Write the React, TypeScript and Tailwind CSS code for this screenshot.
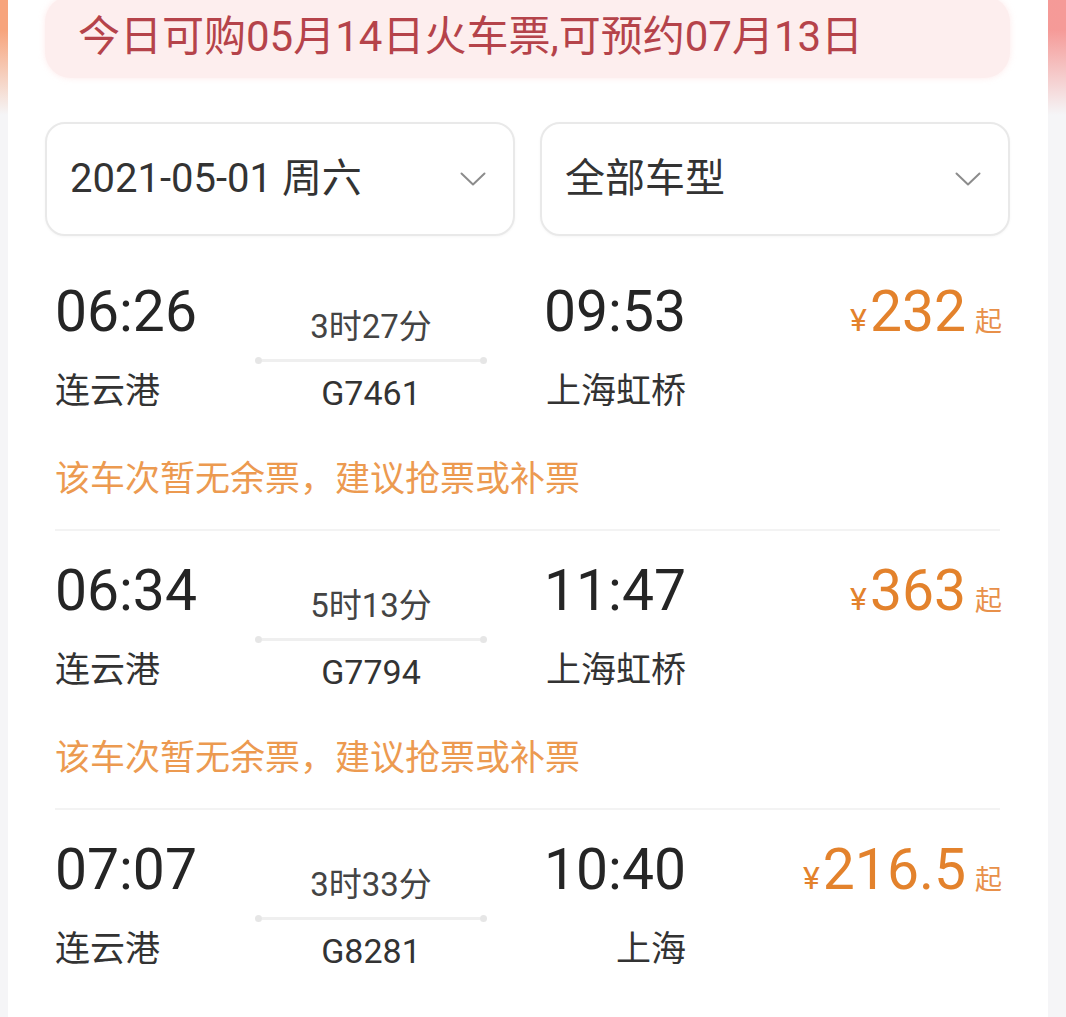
import React from "react";

type Train = {
  dep: string;
  from: string;
  dur: string;
  no: string;
  arr: string;
  to: string;
  price: string;
};

const trains: Train[] = [
  { dep: "06:26", from: "连云港", dur: "3时27分", no: "G7461", arr: "09:53", to: "上海虹桥", price: "232" },
  { dep: "06:34", from: "连云港", dur: "5时13分", no: "G7794", arr: "11:47", to: "上海虹桥", price: "363" },
  { dep: "07:07", from: "连云港", dur: "3时33分", no: "G8281", arr: "10:40", to: "上海", price: "216.5" },
];

function Chevron() {
  return (
    <svg width="26" height="14" viewBox="0 0 26 14" fill="none">
      <path d="M1.5 1.5 L13 12.5 L24.5 1.5" stroke="#8c8c8c" strokeWidth="2" strokeLinecap="round" strokeLinejoin="round" />
    </svg>
  );
}

function Select({ label }: { label: string }) {
  return (
    <div className="flex h-[114px] flex-1 items-center justify-between rounded-[20px] border-2 border-[#e9e9e9] bg-white pl-[23px] pr-[27px] shadow-[0_1px_3px_rgba(0,0,0,0.04)]">
      <span className="text-[40px] leading-[40px] text-[#333333]">{label}</span>
      <Chevron />
    </div>
  );
}

function Row({ t }: { t: Train }) {
  return (
    <div className="pt-[31px]">
      <div className="grid grid-cols-[200px_232px_199px_1fr]">
        <div className="flex flex-col">
          <div className="text-[57px] leading-[57px] text-[#252525]">{t.dep}</div>
          <div className="mt-[34px] text-[35px] leading-[35px] text-[#333333]">{t.from}</div>
        </div>
        <div className="flex flex-col items-center">
          <div className="mt-[27px] text-[33px] leading-[33px] text-[#444444]">{t.dur}</div>
          <div className="mt-[14px] flex w-full items-center">
            <span className="h-[7px] w-[7px] rounded-full bg-[#e6e6e6]" />
            <span className="h-[3px] flex-1 bg-[#efefef]" />
            <span className="h-[7px] w-[7px] rounded-full bg-[#e6e6e6]" />
          </div>
          <div className="mt-[12px] text-[34px] leading-[34px] text-[#333333]">{t.no}</div>
        </div>
        <div className="flex flex-col items-end">
          <div className="text-[57px] leading-[57px] text-[#252525]">{t.arr}</div>
          <div className="mt-[34px] text-[35px] leading-[35px] text-[#333333]">{t.to}</div>
        </div>
        <div className="flex items-baseline justify-end text-[57px] leading-[57px]">
          <span className="mr-[3px] text-[32px] leading-none text-[#e3822c]">¥</span>
          <span className="text-[57px] leading-[57px] text-[#e3822c]">{t.price}</span>
          <span className="ml-[9px] text-[27px] leading-none text-[#e8904a]">起</span>
        </div>
      </div>
      <div className="mt-[52px] text-[35px] leading-[35px] text-[#ec9a50]">该车次暂无余票，建议抢票或补票</div>
      <div className="mr-[2px] mt-[32px] h-[2px] bg-[#f3f3f3]" />
    </div>
  );
}

export default function App() {
  return (
    <div className="h-[1017px] w-full overflow-hidden bg-[linear-gradient(to_bottom,rgba(245,245,247,0)_0px,rgba(245,245,247,0)_30px,#f5f5f7_115px),linear-gradient(to_right,#f7a47c,#f59a98)] [font-family:Roboto,'Noto_Sans_CJK_SC',sans-serif]">
      <div className="ml-[8px] mr-[18px] flow-root h-full bg-white pl-[37px] pr-[38px]">
        <div className="-mt-[4px] flex h-[82px] items-center rounded-[26px] bg-[#fdeeee] pl-[33px] shadow-[0_0_6px_rgba(253,225,225,0.7)]">
          <span className="text-[42px] leading-[42px] text-[#b5434a]">今日可购05月14日火车票,可预约07月13日</span>
        </div>
        <div className="mt-[44px] flex gap-[25px]">
          <Select label="2021-05-01 周六" />
          <Select label="全部车型" />
        </div>
        <div className="mt-[16px] pl-[10px] pr-[8px]">
          {trains.map((t) => (
            <Row key={t.no} t={t} />
          ))}
        </div>
      </div>
    </div>
  );
}
